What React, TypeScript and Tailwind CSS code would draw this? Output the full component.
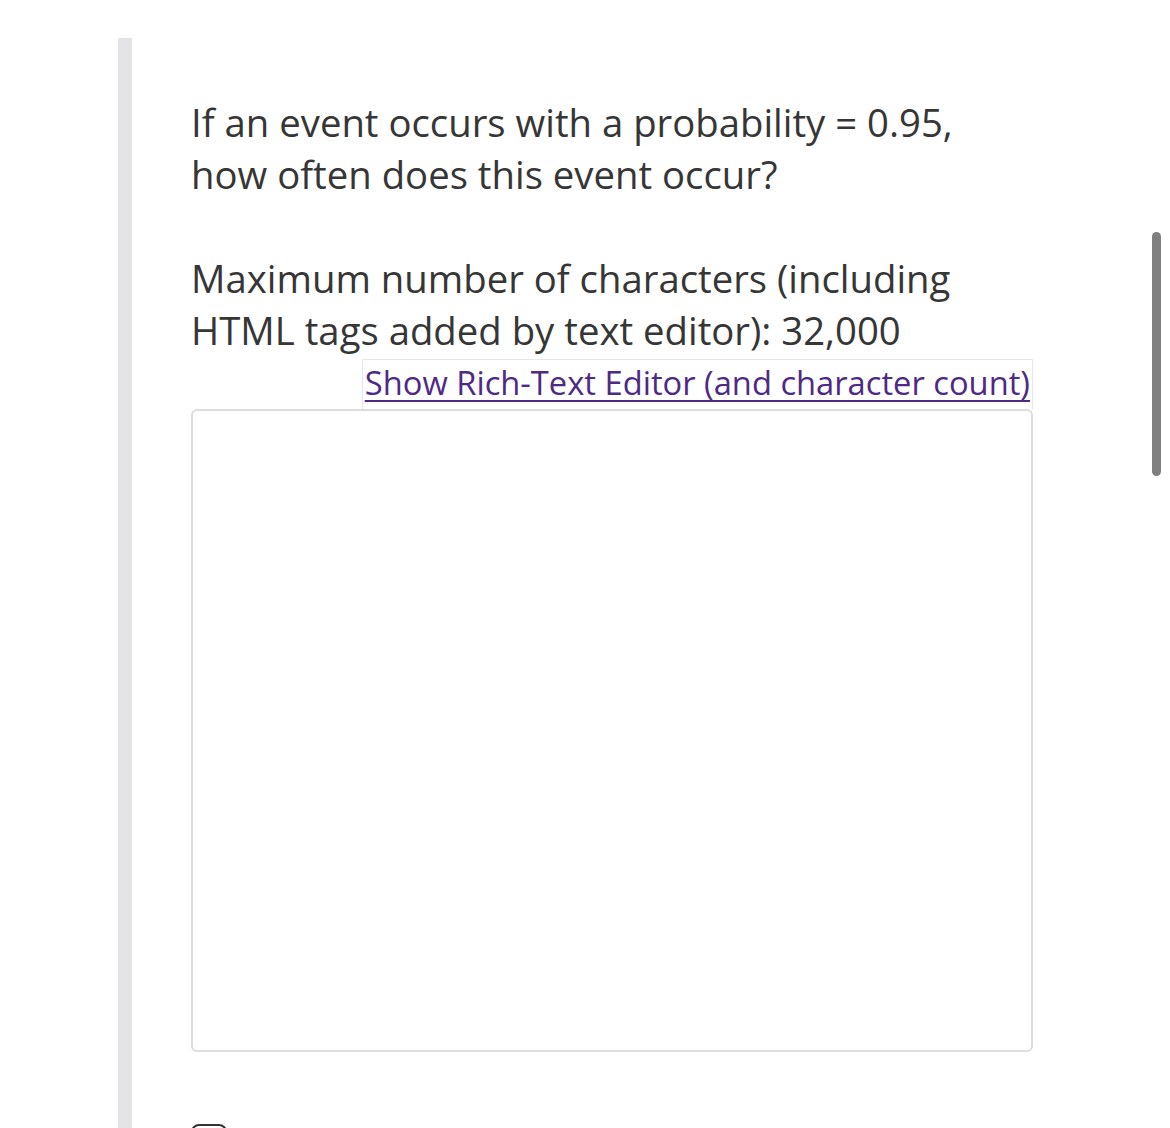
const App = () => {
  return (
    <div className="relative h-[1128px] w-[1170px] overflow-hidden bg-white font-['Open_Sans',sans-serif] text-[#363636]">
      <div className="flex h-full pl-[118px] pt-[38px]">
        <div className="w-[14px] shrink-0 bg-[#e4e4e7]" />
        <div className="w-[901px] pl-[59px] pt-[58px]">
          <p className="text-[38.3px] leading-[52px]">
            If an event occurs with a probability = 0.95,
            <br />
            how often does this event occur?
          </p>
          <p className="mt-[52px] text-[38.3px] leading-[52px]">
            Maximum number of characters (including
            <br />
            HTML tags added by text editor): 32,000
          </p>
          <div className="mt-[3px] flex w-[842px] justify-end">
            <div className="h-[50px] border border-b-0 border-[#e6e6e6] px-[2px] pt-[1px]">
              <a
                href="#"
                className="text-[32.7px] leading-[44px] text-[#4e2a84] underline decoration-[2px] underline-offset-[5px]"
              >
                Show Rich-Text Editor (and character count)
              </a>
            </div>
          </div>
          <textarea className="block h-[643px] w-[842px] resize-none rounded-[6px] border-2 border-[#dddddd] bg-white" />
          <div className="mt-[72px] flex items-start gap-4">
            <div className="h-[36px] w-[36px] shrink-0 rounded-[8px] border-2 border-[#333333]" />
            <span className="pt-[4px] text-[38px] leading-[52px]">I agree</span>
          </div>
        </div>
      </div>
      <div className="absolute left-[1152px] top-[232px] h-[244px] w-[9px] rounded-full bg-[#808080]" />
    </div>
  )
}

export default App
